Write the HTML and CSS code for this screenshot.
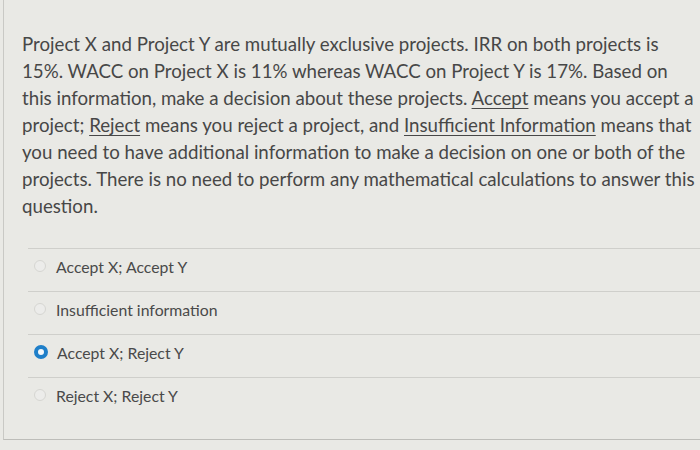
FILE: index.html
```html
<!DOCTYPE html>
<html>
<head>
<meta charset="utf-8">
<link rel="stylesheet" href="styles.css">
</head>
<body>
<div class="card">
  <p class="question">Project X and Project Y are mutually exclusive projects. IRR on both projects is 15%. WACC on Project X is 11% whereas WACC on Project Y is 17%. Based on this information, make a decision about these projects. <u>Accept</u> means you accept a project; <u>Reject</u> means you reject a project, and <u>Insufficient Information</u> means that you need to have additional information to make a decision on one or both of the projects. There is no need to perform any mathematical calculations to answer this question.</p>
  <div class="options">
    <div class="option"><span class="radio"></span><span class="label">Accept X; Accept Y</span></div>
    <div class="option"><span class="radio"></span><span class="label">Insufficient information</span></div>
    <div class="option"><span class="radio checked"></span><span class="label">Accept X; Reject Y</span></div>
    <div class="option"><span class="radio"></span><span class="label">Reject X; Reject Y</span></div>
  </div>
</div>
</body>
</html>
```
FILE: styles.css
```css
html, body {
  margin: 0;
  padding: 0;
  background: #e9e9e5;
}
body {
  font-family: Lato, "Liberation Sans", sans-serif;
  color: #474747;
  width: 700px;
  height: 450px;
  overflow: hidden;
}
.card {
  margin-left: 3px;
  border-left: 1px solid #c9c9c5;
  border-bottom: 1px solid #bdbdb9;
  height: 440px;
  box-sizing: border-box;
  padding-top: 31px;
  display: flex;
  flex-direction: column;
}
.question {
  margin: 0 0 0 18px;
  font-size: 18.7px;
  line-height: 27px;
}
.question u {
  text-decoration-thickness: 1px;
  text-underline-offset: 3px;
}
.options {
  margin-top: 28px;
  margin-left: 24px;
}
.option {
  border-top: 1px solid #cfcfcb;
  height: 43px;
  box-sizing: border-box;
  padding-bottom: 8px;
  display: flex;
  align-items: center;
  gap: 10px;
  padding-left: 6px;
  font-size: 15.8px;
  color: #4a4a4a;
}
.radio {
  width: 12px;
  height: 12px;
  border-radius: 50%;
  border: 1px solid #d6d6d2;
  background: #ececea;
  box-sizing: border-box;
  flex: none;
}
.radio.checked {
  width: 14px;
  height: 14px;
  border: 4px solid #1f7fc9;
  background: #f4f8fb;
  margin-right: -1px;
}
```
